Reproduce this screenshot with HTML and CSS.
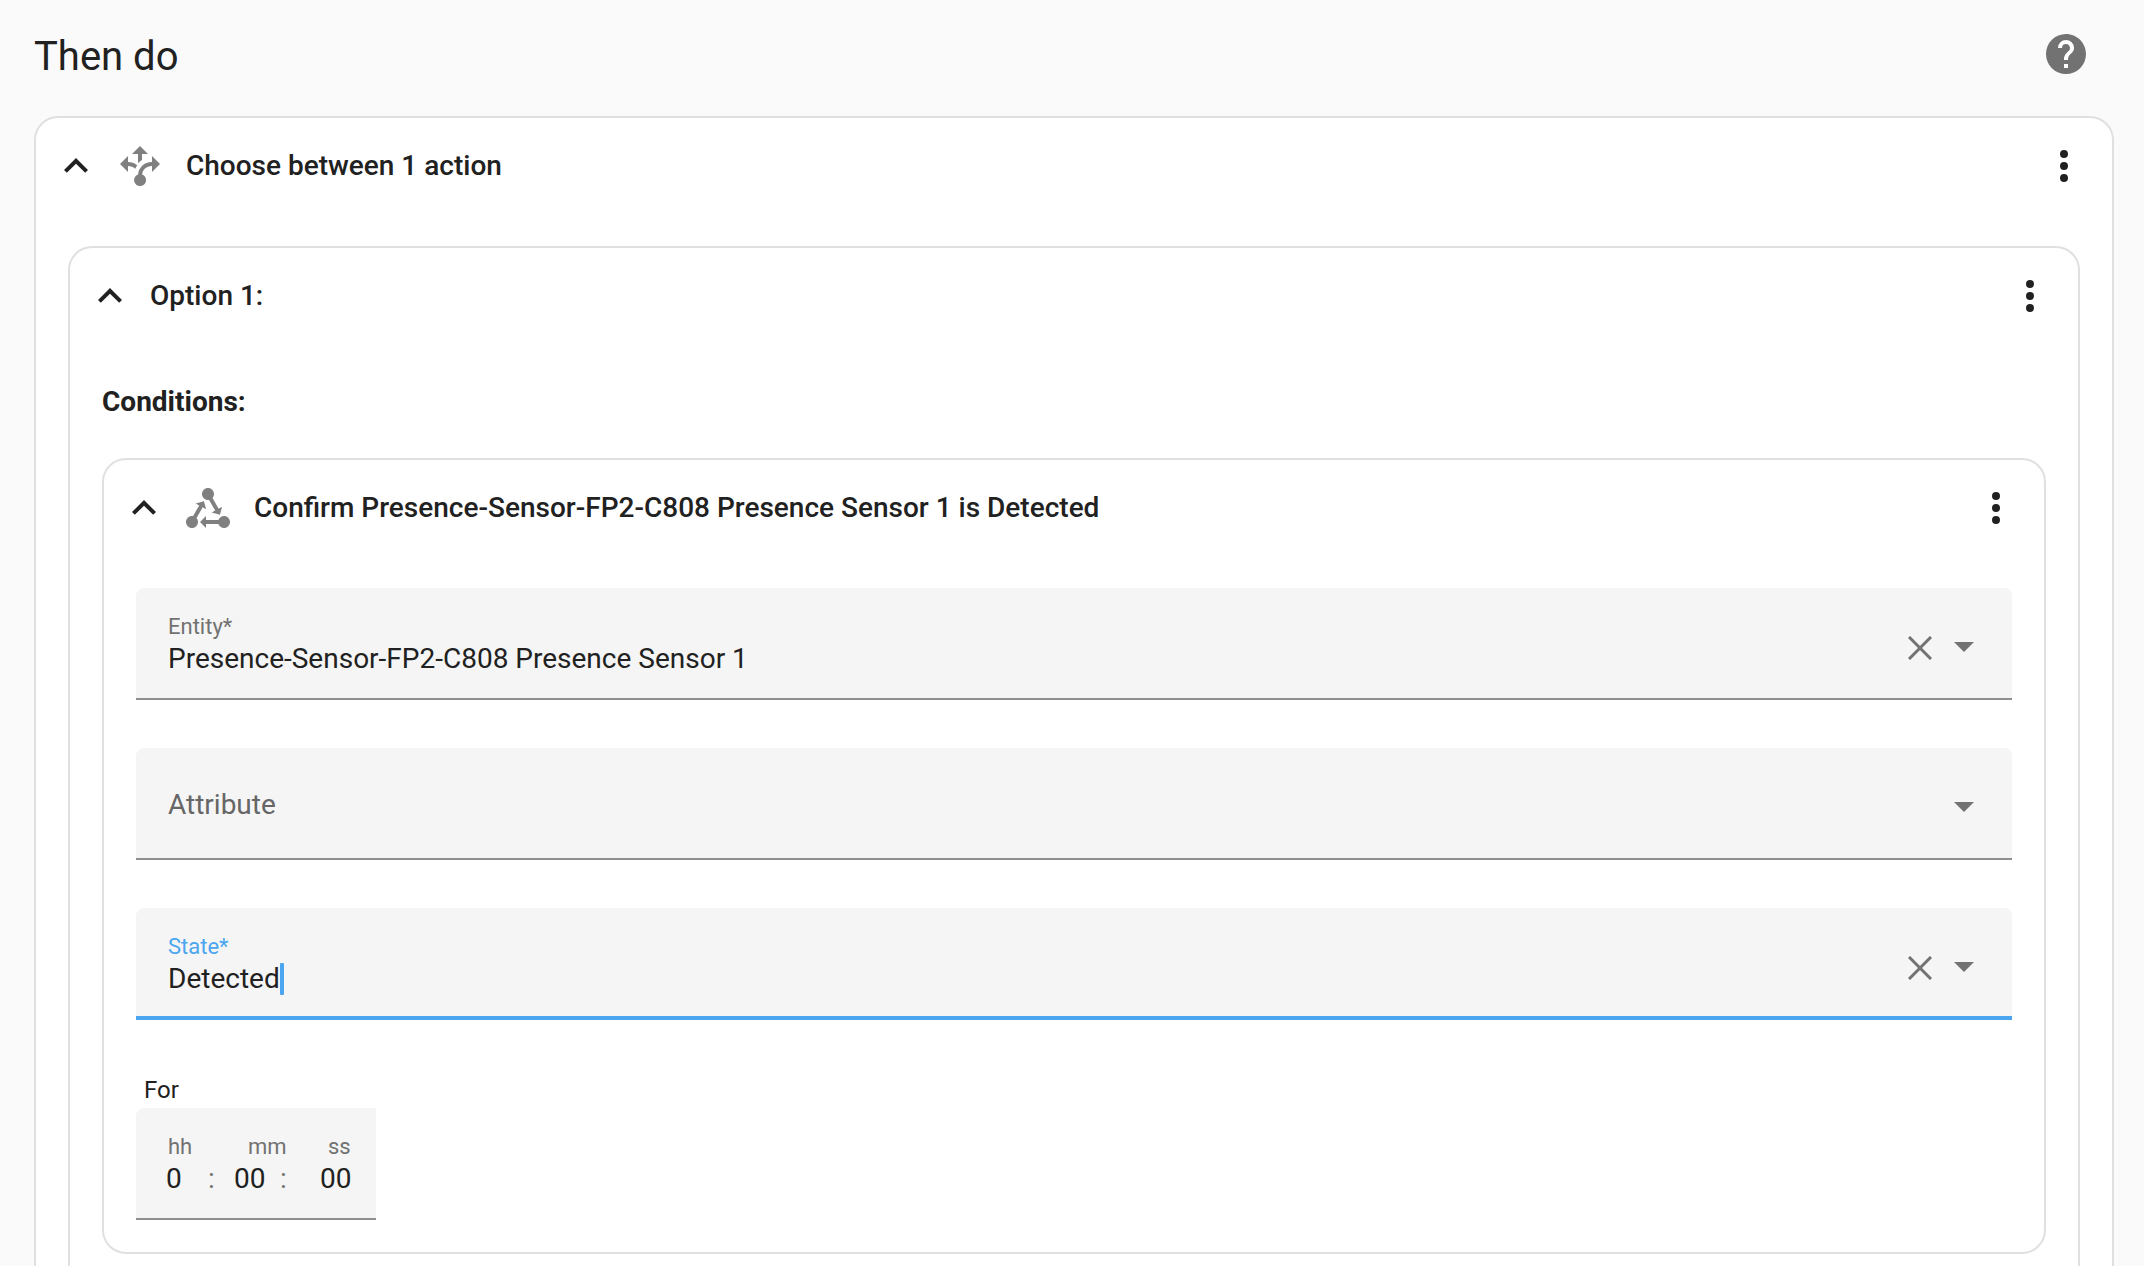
FILE: index.html
```html
<!DOCTYPE html>
<html lang="en">
<head>
<meta charset="utf-8">
<title>Automation actions</title>
<meta name="viewport" content="width=device-width, initial-scale=1">
<link rel="stylesheet" href="styles.css">
</head>
<body>
<main class="page">
  <header class="page-header">
    <h1 class="page-title">Then do</h1>
    <a class="icon-button help" href="#help" aria-label="Help">
      <svg class="icon" viewBox="0 0 24 24"><circle cx="12" cy="12" r="9" fill="#fff"/><path d="M15.07,11.25L14.17,12.17C13.45,12.89 13,13.5 13,15H11V14.5C11,13.39 11.45,12.39 12.17,11.67L13.41,10.41C13.78,10.05 14,9.55 14,9C14,7.89 13.1,7 12,7A2,2 0 0,0 10,9H8A4,4 0 0,1 12,5A4,4 0 0,1 16,9C16,9.88 15.64,10.67 15.07,11.25M13,19H11V17H13M12,2A10,10 0 0,0 2,12A10,10 0 0,0 12,22A10,10 0 0,0 22,12C22,6.47 17.5,2 12,2Z"/></svg>
    </a>
  </header>

  <section class="card card-open">
    <div class="card-header">
      <button class="icon-button" type="button" aria-label="Collapse action" aria-expanded="true">
        <svg class="icon" viewBox="0 0 24 24"><path d="M7.41,15.41L12,10.83L16.59,15.41L18,14L12,8L6,14L7.41,15.41Z"/></svg>
      </button>
      <svg class="icon type-icon" viewBox="0 0 24 24" aria-hidden="true"><path d="M9.64,13.4C8.63,12.5 7.34,12.03 6,12V15L2,11L6,7V10C7.67,10 9.3,10.57 10.63,11.59C10.22,12.15 9.89,12.76 9.64,13.4M18,15V12C17.5,12 13.5,12.16 13.05,16.2C14.61,16.75 15.43,18.47 14.88,20.03C14.33,21.59 12.61,22.41 11.05,21.86C9.5,21.3 8.67,19.59 9.22,18.03C9.5,17.17 10.2,16.5 11.05,16.2C11.34,12.61 14.4,9.88 18,10V7L22,11L18,15M13,6V9.05C12.26,9.5 11.58,10.03 11,10.65V6H8L12,2L16,6H13Z"/></svg>
      <h2 class="card-title">Choose between 1 action</h2>
      <button class="icon-button" type="button" aria-label="Action menu">
        <svg class="icon" viewBox="0 0 24 24"><path d="M12,16A2,2 0 0,1 14,18A2,2 0 0,1 12,20A2,2 0 0,1 10,18A2,2 0 0,1 12,16M12,10A2,2 0 0,1 14,12A2,2 0 0,1 12,14A2,2 0 0,1 10,12A2,2 0 0,1 12,10M12,4A2,2 0 0,1 14,6A2,2 0 0,1 12,8A2,2 0 0,1 10,6A2,2 0 0,1 12,4Z"/></svg>
      </button>
    </div>
    <div class="card-content">

      <section class="card card-open">
        <div class="card-header">
          <button class="icon-button" type="button" aria-label="Collapse option" aria-expanded="true">
            <svg class="icon" viewBox="0 0 24 24"><path d="M7.41,15.41L12,10.83L16.59,15.41L18,14L12,8L6,14L7.41,15.41Z"/></svg>
          </button>
          <h3 class="card-title">Option 1:</h3>
          <button class="icon-button" type="button" aria-label="Option menu">
            <svg class="icon" viewBox="0 0 24 24"><path d="M12,16A2,2 0 0,1 14,18A2,2 0 0,1 12,20A2,2 0 0,1 10,18A2,2 0 0,1 12,16M12,10A2,2 0 0,1 14,12A2,2 0 0,1 12,14A2,2 0 0,1 10,12A2,2 0 0,1 12,10M12,4A2,2 0 0,1 14,6A2,2 0 0,1 12,8A2,2 0 0,1 10,6A2,2 0 0,1 12,4Z"/></svg>
          </button>
        </div>
        <div class="option-content">
          <h4 class="section-title">Conditions:</h4>

          <section class="card">
            <div class="card-header">
              <button class="icon-button" type="button" aria-label="Collapse condition" aria-expanded="true">
                <svg class="icon" viewBox="0 0 24 24"><path d="M7.41,15.41L12,10.83L16.59,15.41L18,14L12,8L6,14L7.41,15.41Z"/></svg>
              </button>
              <svg class="icon type-icon" viewBox="0 0 24 24" aria-hidden="true"><path d="M6.27 17.05C6.72 17.58 7 18.25 7 19C7 20.66 5.66 22 4 22S1 20.66 1 19 2.34 16 4 16C4.18 16 4.36 16 4.53 16.05L7.6 10.69L5.86 9.7L9.95 8.58L11.07 12.67L9.33 11.68L6.27 17.05M20 16C18.7 16 17.6 16.84 17.18 18H11V16L8 19L11 22V20H17.18C17.6 21.16 18.7 22 20 22C21.66 22 23 20.66 23 19S21.66 16 20 16M12 8C12.18 8 12.36 8 12.53 7.95L15.6 13.31L13.86 14.3L17.95 15.42L19.07 11.33L17.33 12.32L14.27 6.95C14.72 6.42 15 5.75 15 5C15 3.34 13.66 2 12 2S9 3.34 9 5 10.34 8 12 8Z"/></svg>
              <h5 class="card-title">Confirm Presence-Sensor-FP2-C808 Presence Sensor 1 is Detected</h5>
              <button class="icon-button" type="button" aria-label="Condition menu">
                <svg class="icon" viewBox="0 0 24 24"><path d="M12,16A2,2 0 0,1 14,18A2,2 0 0,1 12,20A2,2 0 0,1 10,18A2,2 0 0,1 12,16M12,10A2,2 0 0,1 14,12A2,2 0 0,1 12,14A2,2 0 0,1 10,12A2,2 0 0,1 12,10M12,4A2,2 0 0,1 14,6A2,2 0 0,1 12,8A2,2 0 0,1 10,6A2,2 0 0,1 12,4Z"/></svg>
              </button>
            </div>

            <form class="card-content fields">
              <div class="field">
                <div class="field-main">
                  <label class="field-label" for="entity">Entity*</label>
                  <input class="field-input" id="entity" type="text" value="Presence-Sensor-FP2-C808 Presence Sensor 1">
                </div>
                <button class="clear-button" type="button" aria-label="Clear entity">
                  <svg class="clear-icon" viewBox="0 0 24 24"><path d="M1,1L23,23M23,1L1,23"/></svg>
                </button>
                <button class="icon-button drop" type="button" aria-label="Show entities">
                  <svg class="icon" viewBox="0 0 24 24"><path d="M7,10L12,15L17,10H7Z"/></svg>
                </button>
              </div>

              <div class="field">
                <div class="field-main">
                  <input class="field-input" id="attribute" type="text" placeholder="Attribute" aria-label="Attribute">
                </div>
                <button class="icon-button drop" type="button" aria-label="Show attributes">
                  <svg class="icon" viewBox="0 0 24 24"><path d="M7,10L12,15L17,10H7Z"/></svg>
                </button>
              </div>

              <div class="field field-active">
                <div class="field-main">
                  <label class="field-label" for="state">State*</label>
                  <div class="field-edit">
                    <input class="field-input field-fit" id="state" type="text" value="Detected">
                    <span class="caret"></span>
                  </div>
                </div>
                <button class="clear-button" type="button" aria-label="Clear state">
                  <svg class="clear-icon" viewBox="0 0 24 24"><path d="M1,1L23,23M23,1L1,23"/></svg>
                </button>
                <button class="icon-button drop" type="button" aria-label="Show states">
                  <svg class="icon" viewBox="0 0 24 24"><path d="M7,10L12,15L17,10H7Z"/></svg>
                </button>
              </div>

              <fieldset class="duration">
                <legend class="duration-title">For</legend>
                <div class="duration-box">
                  <div class="unit unit-hours">
                    <label class="field-label" for="hours">hh</label>
                    <div class="unit-row"><input class="field-input unit-input" id="hours" type="text" inputmode="numeric" value="0"><span class="colon">:</span></div>
                  </div>
                  <div class="unit unit-minutes">
                    <label class="field-label" for="minutes">mm</label>
                    <div class="unit-row"><input class="field-input unit-input" id="minutes" type="text" inputmode="numeric" value="00"><span class="colon">:</span></div>
                  </div>
                  <div class="unit unit-seconds">
                    <label class="field-label" for="seconds">ss</label>
                    <div class="unit-row"><input class="field-input unit-input" id="seconds" type="text" inputmode="numeric" value="00"></div>
                  </div>
                </div>
              </fieldset>
            </form>
          </section>
        </div>
      </section>
    </div>
  </section>
</main>
</body>
</html>
```
FILE: styles.css
```css
:root {
  --text: #212121;
  --muted: #727272;
  --icon: #808080;
  --line: #e0e0e0;
  --fill: #f5f5f5;
  --accent: #4ba6ef;
}

* {
  box-sizing: border-box;
}

body {
  margin: 0;
  background: #fafafa;
  color: var(--text);
  font-family: Roboto, "Liberation Sans", sans-serif;
  font-size: 28px;
  line-height: 36px;
}

h1, h2, h3, h4, h5 {
  margin: 0;
  font-size: inherit;
}

button, input {
  padding: 0;
  border: 0;
  background: none;
  color: inherit;
  font: inherit;
}

.page {
  display: flex;
  flex-direction: column;
  min-height: 100vh;
  padding: 0 30px 0 34px;
}

.page-header {
  display: flex;
  align-items: center;
  justify-content: space-between;
  height: 116px;
  padding: 0 24px 8px 0;
}

.page-title {
  padding-top: 6px;
  font-size: 40px;
  font-weight: 400;
  line-height: 48px;
}

.icon {
  display: block;
  flex: none;
  width: 48px;
  height: 48px;
  fill: currentColor;
}

.icon-button {
  display: block;
  flex: none;
}

.help {
  color: var(--muted);
}

.card {
  border: 2px solid var(--line);
  border-radius: 24px;
  background: #fff;
}

/* Cards whose content carries on past the fold */
.card-open {
  display: flex;
  flex: 1;
  flex-direction: column;
  border-bottom: 0;
  border-radius: 24px 24px 0 0;
}

.card-header {
  display: flex;
  align-items: center;
  gap: 16px;
  height: 96px;
  padding: 0 24px 0 16px;
}

.card-title {
  flex: 1;
  font-weight: 500;
}

.type-icon {
  margin-right: 6px;
  color: var(--icon);
}

.card-content {
  padding: 32px;
}

.card-open > .card-content {
  display: flex;
  flex: 1;
  flex-direction: column;
  padding-bottom: 0;
}

.option-content {
  padding: 0 32px 12px;
}

.section-title {
  padding: 40px 0 38px;
  font-weight: 700;
}

.fields {
  display: flex;
  flex-direction: column;
  gap: 48px;
}

.field {
  display: flex;
  align-items: center;
  height: 112px;
  padding: 4px 24px 0 32px;
  border-bottom: 2px solid #8e8e8e;
  border-radius: 8px 8px 0 0;
  background: var(--fill);
}

.field-active {
  padding-top: 6px;
  border-bottom: 4px solid var(--accent);
}

.field-main {
  display: flex;
  flex: 1;
  flex-direction: column;
}

.field-label {
  display: block;
  color: var(--muted);
  font-size: 22px;
  line-height: 28px;
}

.field-active .field-label {
  color: var(--accent);
}

.field-input {
  display: block;
  width: 100%;
  height: 36px;
  outline: 0;
}

.field-input::placeholder {
  color: #666;
  opacity: 1;
}

.field-edit {
  display: flex;
  align-items: center;
}

.field-fit {
  width: auto;
  field-sizing: content;
}

.caret {
  width: 4px;
  height: 32px;
  border-radius: 1px;
  background: var(--accent);
}

.clear-button {
  padding: 6px 8px 0;
  color: var(--muted);
}

.clear-icon {
  display: block;
  width: 24px;
  height: 24px;
  fill: none;
  stroke: currentColor;
  stroke-width: 3;
}

.drop {
  padding-top: 2px;
  color: var(--muted);
}

.duration {
  min-width: 0;
  margin: 0;
  padding: 0;
  border: 0;
}

.duration-title {
  padding: 6px 8px 2px;
  font-size: 24px;
  line-height: 32px;
}

.duration-box {
  display: flex;
  align-items: center;
  width: 240px;
  height: 112px;
  padding: 4px 0 0 30px;
  border-bottom: 2px solid #8e8e8e;
  border-radius: 8px 0 0;
  background: var(--fill);
}

.unit-hours {
  width: 68px;
}

.unit-minutes {
  width: 86px;
}

.unit-seconds {
  width: 48px;
}

.unit-hours .field-label {
  padding-left: 2px;
}

.unit-minutes .field-label {
  padding-left: 14px;
}

.unit-seconds .field-label {
  padding-left: 8px;
}

.unit-row {
  display: flex;
}

.unit-input {
  width: 42px;
}

.colon {
  color: var(--muted);
}

.unit-minutes .colon {
  padding-left: 4px;
}
```
